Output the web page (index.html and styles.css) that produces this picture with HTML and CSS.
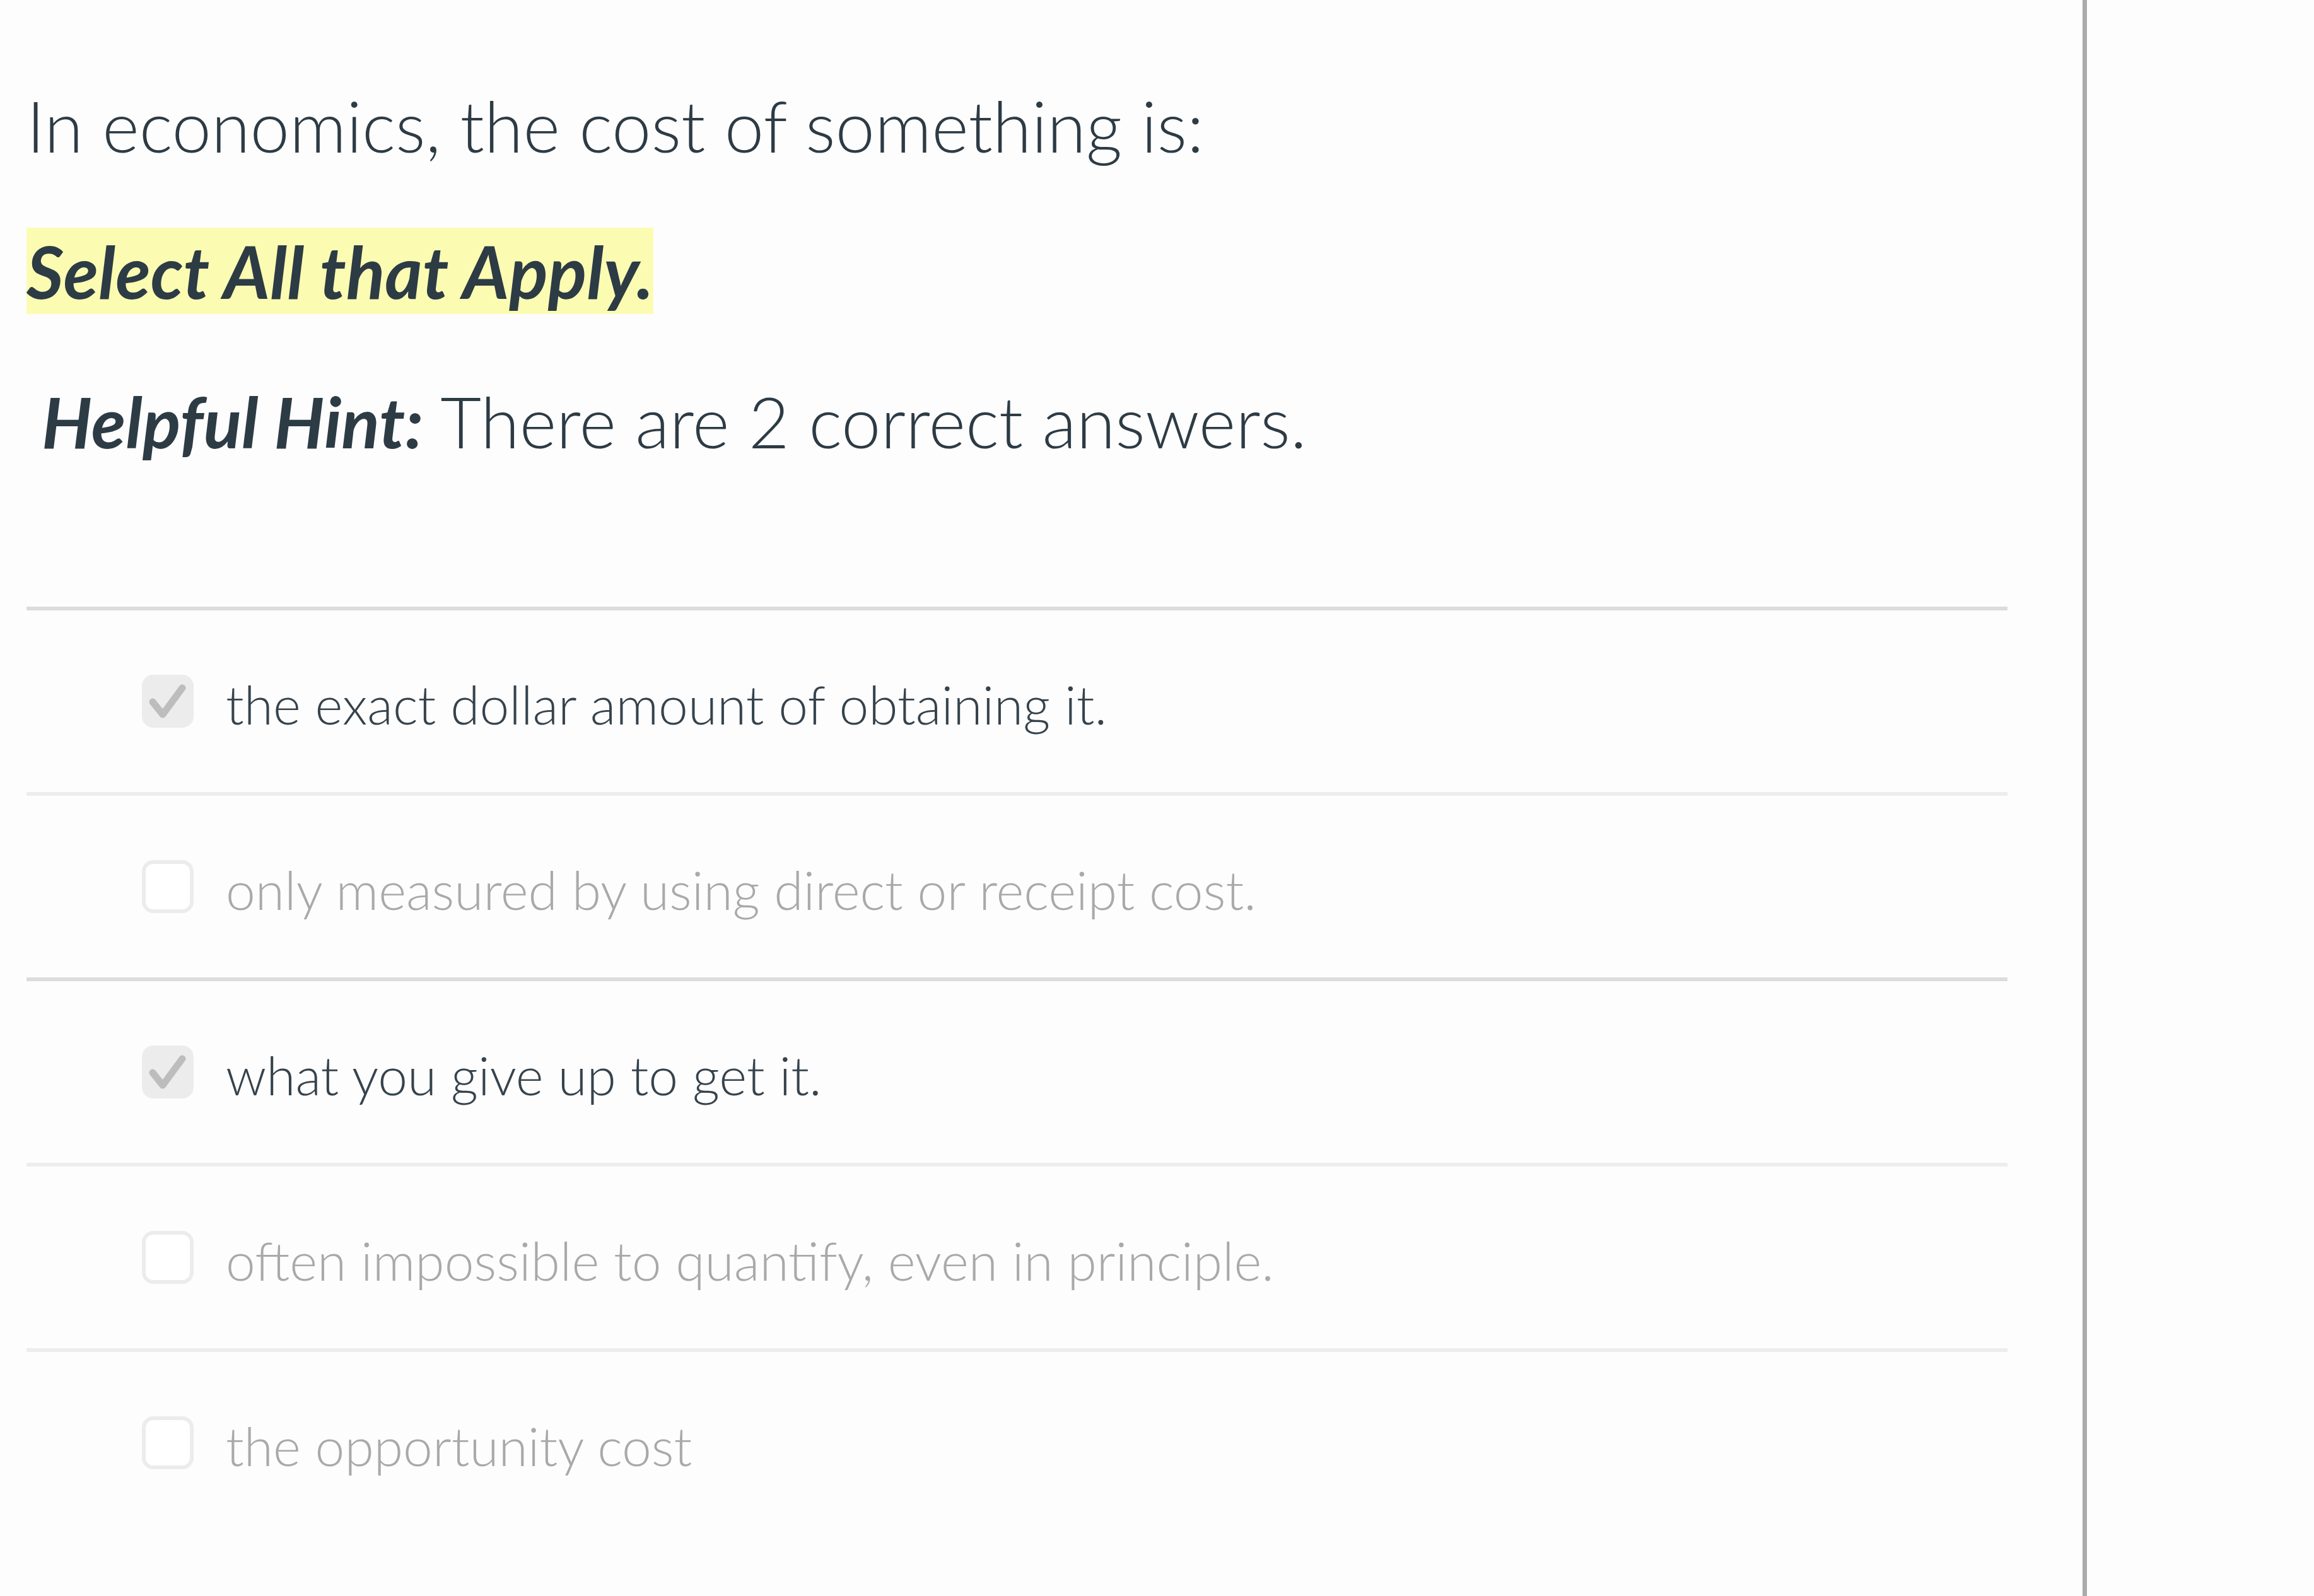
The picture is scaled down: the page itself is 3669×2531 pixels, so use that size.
FILE: index.html
```html
<!DOCTYPE html>
<html lang="en">
<head>
  <meta charset="UTF-8">
  <title>Quiz Question</title>
  <link rel="stylesheet" href="styles.css">
</head>
<body>
  <div class="page">
    <div class="quiz">
      <div class="question">
        <p>In economics, the cost of something is:</p>
        <p class="select"><span class="highlight">Select All that Apply.</span></p>
        <p class="hint"><strong>Helpful Hint:</strong> There are 2 correct answers.</p>
      </div>

      <div class="answers">
        <div class="answer checked">
          <span class="box">
            <svg viewBox="0 0 82 84" width="82" height="84"><path d="M17 43 L33 63 L64 21" /></svg>
          </span>
          <span class="answer-text">the exact dollar amount of obtaining it.</span>
        </div>
        <div class="answer">
          <span class="box"></span>
          <span class="answer-text">only measured by using direct or receipt cost.</span>
        </div>
        <div class="answer checked">
          <span class="box">
            <svg viewBox="0 0 82 84" width="82" height="84"><path d="M17 43 L33 63 L64 21" /></svg>
          </span>
          <span class="answer-text">what you give up to get it.</span>
        </div>
        <div class="answer">
          <span class="box"></span>
          <span class="answer-text">often impossible to quantify, even in principle.</span>
        </div>
        <div class="answer">
          <span class="box"></span>
          <span class="answer-text">the opportunity cost</span>
        </div>
      </div>
    </div>
  </div>
</body>
</html>
```

FILE: styles.css
```css
body { margin: 0; background: #fdfdfd; font-family: Lato, "Liberation Sans", sans-serif; color: #2d3b45; }
.page { display: flex; min-height: 2531px; }
.quiz { width: 3309px; box-sizing: border-box; padding: 0 119px 0 42px; border-right: 7px solid #ababab; }

.question { padding-top: 132px; font-size: 112px; font-weight: 300; line-height: 1.2; }
.question p { margin: 0 0 96px; }
.question .select { margin-bottom: 102px; }
.highlight { background: #fbfcb2; font-size: 114px; font-weight: 700; font-style: italic; }
.question .hint { padding-left: 24px; margin-bottom: 226px; }
.hint strong { font-weight: 700; font-style: italic; }

.answer { display: flex; align-items: center; gap: 51px; height: 294px; box-sizing: border-box; padding-left: 183px; border-top: 6px solid #ededed; font-size: 84px; font-weight: 300; color: #a9a9a9; }
.answer.checked { border-top-color: #dcdcdc; color: #36434d; }
.answer-text { padding-top: 10px; }
.box { flex: none; width: 82px; height: 84px; box-sizing: border-box; border: 6px solid #ececec; border-radius: 18px; background: #fff; position: relative; }
.checked .box { background: #ececec; }
.box svg { position: absolute; left: -6px; top: -6px; }
.box path { fill: none; stroke: #bdbdbd; stroke-width: 11; stroke-linecap: round; stroke-linejoin: round; }
```
